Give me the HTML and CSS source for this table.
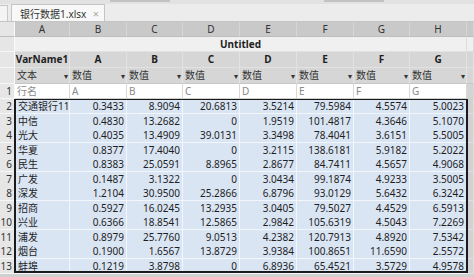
FILE: index.html
```html
<!DOCTYPE html>
<html lang="zh-CN">
  <head>
    <meta charset="UTF-8" />
    <title>银行数据1.xlsx</title>
    <link rel="stylesheet" href="styles.css">
  </head>
  <body>
    <div class="window">
      <!-- strip of the panel above, cut off -->
      <div class="top-strip">
        <span class="strip-mark"></span>
        <span class="strip-mark right"></span>
      </div>

      <!-- document tabs -->
      <div class="tabbar">
        <div class="tab-stub"></div>
        <div class="tab">
          <span class="tab-name">银行数据1.xlsx</span>
          <span class="tab-close">×</span>
        </div>
      </div>

      <!-- spreadsheet -->
      <div class="sheet">
        <div class="row letters">
          <div class="rn"></div>
          <div class="c">A</div><div class="c">B</div><div class="c">C</div><div class="c">D</div>
          <div class="c">E</div><div class="c">F</div><div class="c">G</div><div class="c">H</div>
          <div class="c last"></div>
        </div>

        <div class="row title">
          <div class="rn"></div>
          <div class="c span">Untitled</div>
          <div class="c last"></div>
        </div>

        <div class="row names">
          <div class="rn"></div>
          <div class="c">VarName1</div><div class="c">A</div><div class="c">B</div><div class="c">C</div>
          <div class="c">D</div><div class="c">E</div><div class="c">F</div><div class="c">G</div>
          <div class="c last"></div>
        </div>

        <div class="row types">
          <div class="rn"></div>
          <div class="c">文本<i>▾</i></div><div class="c">数值<i>▾</i></div><div class="c">数值<i>▾</i></div>
          <div class="c">数值<i>▾</i></div><div class="c">数值<i>▾</i></div><div class="c">数值<i>▾</i></div>
          <div class="c">数值<i>▾</i></div><div class="c">数值<i>▾</i></div>
          <div class="c last"></div>
        </div>

        <div class="row labels">
          <div class="rn">1</div>
          <div class="c">行名</div><div class="c">A</div><div class="c">B</div><div class="c">C</div>
          <div class="c">D</div><div class="c">E</div><div class="c">F</div><div class="c">G</div>
          <div class="c last"></div>
        </div>

        <div class="selection">
          <div class="row data">
            <div class="rn">2</div><div class="c txt">交通银行11</div>
            <div class="c">0.3433</div><div class="c">8.9094</div><div class="c">20.6813</div><div class="c">3.5214</div>
            <div class="c">79.5984</div><div class="c">4.5574</div><div class="c">5.0023</div><div class="c last"></div>
          </div>
          <div class="row data">
            <div class="rn">3</div><div class="c txt">中信</div>
            <div class="c">0.4830</div><div class="c">13.2682</div><div class="c">0</div><div class="c">1.9519</div>
            <div class="c">101.4817</div><div class="c">4.3646</div><div class="c">5.1070</div><div class="c last"></div>
          </div>
          <div class="row data">
            <div class="rn">4</div><div class="c txt">光大</div>
            <div class="c">0.4035</div><div class="c">13.4909</div><div class="c">39.0131</div><div class="c">3.3498</div>
            <div class="c">78.4041</div><div class="c">3.6151</div><div class="c">5.5005</div><div class="c last"></div>
          </div>
          <div class="row data">
            <div class="rn">5</div><div class="c txt">华夏</div>
            <div class="c">0.8377</div><div class="c">17.4040</div><div class="c">0</div><div class="c">3.2115</div>
            <div class="c">138.6181</div><div class="c">5.9182</div><div class="c">5.2022</div><div class="c last"></div>
          </div>
          <div class="row data">
            <div class="rn">6</div><div class="c txt">民生</div>
            <div class="c">0.8383</div><div class="c">25.0591</div><div class="c">8.8965</div><div class="c">2.8677</div>
            <div class="c">84.7411</div><div class="c">4.5657</div><div class="c">4.9068</div><div class="c last"></div>
          </div>
          <div class="row data">
            <div class="rn">7</div><div class="c txt">广发</div>
            <div class="c">0.1487</div><div class="c">3.1322</div><div class="c">0</div><div class="c">3.0434</div>
            <div class="c">99.1874</div><div class="c">4.9233</div><div class="c">3.5005</div><div class="c last"></div>
          </div>
          <div class="row data">
            <div class="rn">8</div><div class="c txt">深发</div>
            <div class="c">1.2104</div><div class="c">30.9500</div><div class="c">25.2866</div><div class="c">6.8796</div>
            <div class="c">93.0129</div><div class="c">5.6432</div><div class="c">6.3242</div><div class="c last"></div>
          </div>
          <div class="row data">
            <div class="rn">9</div><div class="c txt">招商</div>
            <div class="c">0.5927</div><div class="c">16.0245</div><div class="c">13.2935</div><div class="c">3.0405</div>
            <div class="c">79.5027</div><div class="c">4.4529</div><div class="c">6.5913</div><div class="c last"></div>
          </div>
          <div class="row data">
            <div class="rn">10</div><div class="c txt">兴业</div>
            <div class="c">0.6366</div><div class="c">18.8541</div><div class="c">12.5865</div><div class="c">2.9842</div>
            <div class="c">105.6319</div><div class="c">4.5043</div><div class="c">7.2269</div><div class="c last"></div>
          </div>
          <div class="row data">
            <div class="rn">11</div><div class="c txt">浦发</div>
            <div class="c">0.8979</div><div class="c">25.7760</div><div class="c">9.0513</div><div class="c">4.2382</div>
            <div class="c">120.7913</div><div class="c">4.8920</div><div class="c">7.5342</div><div class="c last"></div>
          </div>
          <div class="row data">
            <div class="rn">12</div><div class="c txt">烟台</div>
            <div class="c">0.1900</div><div class="c">1.6567</div><div class="c">13.8729</div><div class="c">3.9384</div>
            <div class="c">100.8651</div><div class="c">11.6590</div><div class="c">2.5572</div><div class="c last"></div>
          </div>
          <div class="row data">
            <div class="rn">13</div><div class="c txt">蚌埠</div>
            <div class="c">0.1219</div><div class="c">3.8798</div><div class="c">0</div><div class="c">6.8936</div>
            <div class="c">65.4521</div><div class="c">3.5729</div><div class="c">4.9578</div><div class="c last"></div>
          </div>
        </div>
      </div>
    </div>
  </body>
</html>
```

FILE: styles.css
```css
:root {
  --header-bg: #c9c9c9;
  --names-bg: #d6d6d6;
  --title-bg: #f0f0f0;
  --rownum-bg: #e6e6e6;
  --sel-bg: #dae5f4;
  --sel-line: #f3f6fb;
  --grid-line: #dcdcdc;
  --text: #1e1e1e;
  --muted: #8a8a8a;
}

* {
  box-sizing: border-box;
  margin: 0;
  padding: 0;
}

body {
  width: 474px;
  height: 277px;
  overflow: hidden;
  background: #e8e8e8;
  font-family: "Noto Sans", "Noto Sans CJK SC", sans-serif;
  font-size: 10px;
  color: var(--text);
}

.window {
  display: flex;
  flex-direction: column;
  height: 100%;
}

/* Panel above, cut off */
.top-strip {
  height: 4px;
  background: #e2e2e2;
  display: flex;
  justify-content: space-between;
  padding: 0 90px 0 110px;
}

.strip-mark {
  width: 60px;
  height: 2px;
  background: #c2c2c2;
}

/* Tabs */
.tabbar {
  height: 18px;
  display: flex;
  align-items: flex-end;
  background: #ececec;
  border-bottom: 1px solid #c4c4c4;
}

.tab-stub {
  width: 8px;
  height: 16px;
  margin-right: 3px;
  background: #f4f4f4;
  border: 1px solid #c8c8c8;
  border-left: 0;
  border-bottom: 0;
}

.tab {
  width: 94px;
  height: 17px;
  display: flex;
  align-items: center;
  justify-content: space-between;
  padding: 0 5px 0 8px;
  background: #f8f8f8;
  border: 1px solid #c4c4c4;
  border-bottom: 0;
  font-size: 10px;
  color: #333;
  white-space: nowrap;
}

.tab-close {
  color: #a8a8a8;
  font-size: 11px;
}

/* Sheet */
.sheet {
  flex: 1;
  display: flex;
  flex-direction: column;
  background: #d0d0d0;
}

.row {
  display: grid;
  grid-template-columns: 15px 55px 57px 56px 57px 57px 57px 56px 57px 1fr;
}

.rn {
  background: var(--rownum-bg);
  border-right: 1px solid #fafafa;
  border-bottom: 1px solid #f6f6f6;
  text-align: right;
  padding-right: 2px;
  color: #333;
}

.c {
  border-right: 1px solid var(--grid-line);
  border-bottom: 1px solid var(--grid-line);
  white-space: nowrap;
  overflow: hidden;
}

.letters {
  height: 15px;
  line-height: 14px;
  background: var(--header-bg);
}
.letters .c {
  text-align: center;
  color: #333;
  border-right-color: #d6d6d6;
  border-bottom-color: #bdbdbd;
}
.letters .rn {
  border-bottom-color: #bdbdbd;
}

.title {
  height: 15px;
  line-height: 14px;
  background: var(--title-bg);
}
.title .span {
  grid-column: 2 / 10;
  text-align: center;
  font-weight: 700;
  border-bottom-color: #e2e2e2;
}

.names {
  height: 16px;
  line-height: 15px;
  background: var(--names-bg);
}
.names .c {
  text-align: center;
  font-weight: 700;
  border-right-color: #e2e2e2;
  border-bottom-color: #e2e2e2;
}

.types {
  height: 16px;
  line-height: 15px;
  background: var(--names-bg);
}
.types .c {
  position: relative;
  padding-left: 2px;
  border-right-color: #e4e4e4;
  border-bottom-color: #c6c6c6;
  color: #333;
}
.types i {
  position: absolute;
  right: 1px;
  top: 0;
  font-style: normal;
  font-size: 8px;
  color: #333;
}
.types .last {
  background: var(--names-bg);
}

.labels {
  height: 15px;
  line-height: 14px;
  background: #fff;
}
.labels .c {
  padding-left: 2px;
  color: var(--muted);
  border-right-color: #d8d8d8;
  border-bottom-color: #d0d0d0;
}
.labels .last {
  background: #d4d4d4;
}

/* Selected block of data rows */
.selection {
  position: relative;
}
.selection::after {
  content: "";
  position: absolute;
  left: 14px;
  right: 6px;
  top: 0;
  bottom: 0;
  border: 2px solid #1a1a1a;
  border-top-width: 1px;
  pointer-events: none;
}

.data {
  height: 14.5px;
  line-height: 14px;
}
.data .c {
  background: var(--sel-bg);
  text-align: right;
  padding-right: 2px;
  border-right-color: var(--sel-line);
  border-bottom-color: var(--sel-line);
}
.data .txt {
  text-align: left;
  padding-left: 3px;
}
.data .last {
  background: #d2d2d2;
  border-color: #e0e0e0;
}
```
